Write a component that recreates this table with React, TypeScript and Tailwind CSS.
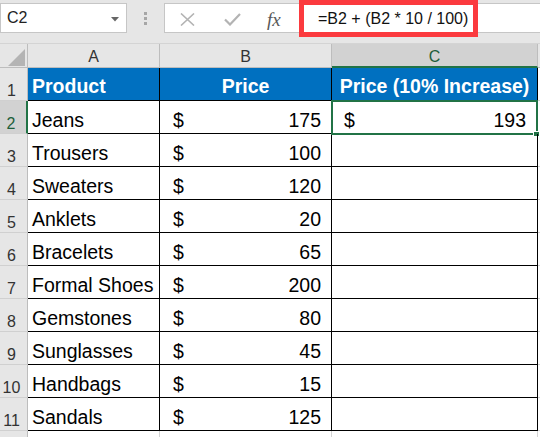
const ROWS: [string, number][] = [
  ["Jeans", 175],
  ["Trousers", 100],
  ["Sweaters", 120],
  ["Anklets", 20],
  ["Bracelets", 65],
  ["Formal Shoes", 200],
  ["Gemstones", 80],
  ["Sunglasses", 45],
  ["Handbags", 15],
  ["Sandals", 125],
];

const sans = "font-['Liberation_Sans',Arial,sans-serif]";

function Toolbar() {
  return (
    <div className="h-[43px] flex items-start pt-[3px] bg-[#e6e6e6]">
      {/* name box */}
      <div className="relative w-[127px] h-[30px] bg-white border border-[#c6c6c6] flex items-center pl-[6px] text-[16px] text-[#222]">
        C2
        <svg className="absolute left-[110px] top-[13px]" width="8" height="5" viewBox="0 0 8 5">
          <polygon points="0,0 8,0 4,4.5" fill="#666" />
        </svg>
      </div>
      <div className="w-[37px] h-[30px] flex flex-col items-center justify-center gap-[2px]">
        <span className="w-[3px] h-[3px] bg-[#a6a6a6]" />
        <span className="w-[3px] h-[3px] bg-[#a6a6a6]" />
        <span className="w-[3px] h-[3px] bg-[#a6a6a6]" />
      </div>
      <div className="relative flex-1 h-[30px] bg-white border border-r-0 border-[#c6c6c6] flex items-center">
        <svg className="absolute left-[15px] top-[9px]" width="15" height="13" viewBox="0 0 15 13">
          <path d="M1 0.5 L14 12.5 M14 0.5 L1 12.5" stroke="#b3b3b3" strokeWidth="1.6" fill="none" />
        </svg>
        <svg className="absolute left-[59px] top-[9px]" width="17" height="13" viewBox="0 0 17 13">
          <path d="M1 6.5 L6 11.5 L16 1" stroke="#b3b3b3" strokeWidth="2.2" fill="none" />
        </svg>
        <span className="absolute left-[102px] top-[2px] italic text-[19px] text-[#595959] font-['Liberation_Serif',serif]">
          fx
        </span>
        {/* highlighted formula */}
        <div className="absolute left-[134px] top-[-4px] w-[179px] h-[37px] border-[5px] border-[#fb3a3e] bg-white flex items-center pl-[14px]">
          <span className={`${sans} text-[16px] text-[#111] leading-none`}>=B2 + (B2 * 10 / 100)</span>
        </div>
      </div>
    </div>
  );
}

function ColumnHeaders() {
  return (
    <div className={`flex h-[25px] border-t border-[#d4d4d4] bg-[#e6e6e6] ${sans} text-[16px] text-[#333]`}>
      <div className="relative w-[28px] border-r border-b border-[#bdbdbd]">
        <svg className="absolute left-[8px] top-[5px]" width="17" height="17" viewBox="0 0 17 17">
          <polygon points="0,17 17,17 17,0" fill="#b4b4b4" />
        </svg>
      </div>
      <div className="w-[132px] border-r border-b border-[#bdbdbd] flex items-end justify-center leading-[16px] pb-[2px]">A</div>
      <div className="w-[172px] border-r border-b border-[#bdbdbd] flex items-end justify-center leading-[16px] pb-[2px]">B</div>
      <div className="w-[206px] bg-[#d2d2d2] border-r border-[#bdbdbd] border-b-2 border-b-[#217346] flex items-end justify-center leading-[16px] pb-[1px] text-[#1d5e3a]">
        C
      </div>
      <div className="flex-1 border-b border-[#bdbdbd]" />
    </div>
  );
}

function RowHeader({ n, selected }: { n: number; selected?: boolean }) {
  return (
    <div
      className={`w-[28px] border-b border-[#d0d0d0] flex items-end justify-center pr-[4px] pb-[1px] leading-[16px] text-[16px] font-normal ${
        selected ? "bg-[#d2d2d2] border-r-2 border-r-[#217346] text-[#1d5e3a]" : "bg-[#e6e6e6] border-r border-r-[#bdbdbd] text-[#333]"
      }`}
    >
      {n}
    </div>
  );
}

export default function App() {
  return (
    <div className={`w-[540px] h-[437px] overflow-hidden bg-white ${sans}`}>
      <Toolbar />
      <ColumnHeaders />

      {/* header row */}
      <div className="flex h-[33px] text-[19.5px] leading-[22px] font-bold text-white">
        <RowHeader n={1} />
        <div className="w-[132px] bg-[#0070c0] border-r border-b border-black flex items-end pl-[4px] pb-[3px]">
          Product
        </div>
        <div className="w-[172px] bg-[#0070c0] border-r border-b border-black flex items-end justify-center pb-[3px]">
          Price
        </div>
        <div className="w-[206px] bg-[#0070c0] border-r border-b border-black flex items-end justify-center pb-[3px]">
          Price (10% Increase)
        </div>
        <div className="flex-1 border-b border-[#d4d4d4]" />
      </div>

      {ROWS.map(([name, price], i) => (
        <div key={name} className="flex h-[33px] text-[19.5px] leading-[22px] text-black">
          <RowHeader n={i + 2} selected={i === 0} />
          <div className="w-[132px] border-r border-b border-black flex items-end pl-[4px] pb-[2px]">{name}</div>
          <div className="w-[172px] border-r border-b border-black flex items-end justify-between pl-[13px] pr-[10px] pb-[2px]">
            <span>$</span>
            <span>{price}</span>
          </div>
          <div className="relative w-[206px] border-r border-b border-black flex items-end justify-between pl-[12px] pr-[11px] pb-[2px]">
            {i === 0 && (
              <>
                <span>$</span>
                <span>193</span>
                <div className="absolute left-[-1px] top-[-1px] w-[207px] h-[35px] border-2 border-[#217346]" />
                <div className="absolute left-[201px] top-[30px] w-[7px] h-[6px] bg-[#217346] border border-white" />
              </>
            )}
          </div>
          <div className="flex-1 border-b border-[#d4d4d4]" />
        </div>
      ))}

      <div className="flex h-[10px]">
        <div className="w-[28px] bg-[#e6e6e6] border-r border-[#bdbdbd]" />
        <div className="w-[132px] border-r border-[#d4d4d4]" />
        <div className="w-[172px] border-r border-[#d4d4d4]" />
        <div className="w-[206px] border-r border-[#d4d4d4]" />
      </div>
    </div>
  );
}
